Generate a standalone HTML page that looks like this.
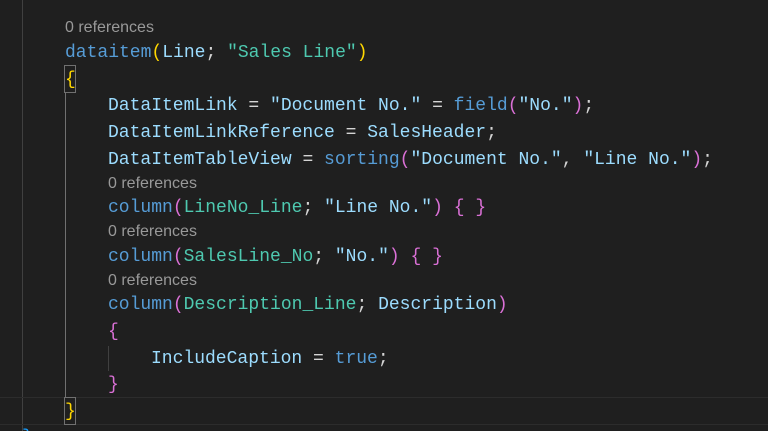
<!DOCTYPE html>
<html><head><meta charset="utf-8"><style>
html,body{margin:0;padding:0;background:#1f1f1f;width:768px;height:431px;overflow:hidden;position:relative}
.l{position:absolute;left:0;white-space:pre;font-family:"Liberation Mono",monospace;font-size:18px;line-height:27px;height:27px;color:#d4d4d4}
.r{position:absolute;white-space:pre;font-family:"Liberation Sans",sans-serif;font-size:16px;color:#999;line-height:20px}
.k{color:#569cd6}.v{color:#9cdcfe}.t{color:#4ec9b0}.g{color:#ffd700}.p{color:#da70d6}.b{color:#179fff}
.gd{position:absolute;width:1px;background:#404040}
</style></head><body>
<div class="gd" style="left:22px;top:0;height:431px"></div>
<div class="gd" style="left:65px;top:92px;height:305px;background:#707070"></div>
<div class="gd" style="left:108px;top:346px;height:25px"></div>
<div style="position:absolute;left:0;top:397px;width:768px;height:26px;border-top:1px solid #2c2c2c;border-bottom:1px solid #2c2c2c"></div>
<div style="position:absolute;left:64px;top:65px;width:10px;height:26px;border:1px solid #707070"></div>
<div style="position:absolute;left:64px;top:397px;width:10px;height:26px;border:1px solid #707070"></div>
<div class="r" style="left:65px;top:18px">0 references</div>
<div class="l" style="top:40px;left:65px"><span class="k">dataitem</span><span class="g">(</span><span class="v">Line</span>; <span class="t">"Sales Line"</span><span class="g">)</span></div>
<div class="l" style="top:67px;left:65px"><span class="g">{</span></div>
<div class="l" style="top:93px;left:108px"><span class="v">DataItemLink</span> = <span class="v">"Document No."</span> = <span class="k">field</span><span class="p">(</span><span class="v">"No."</span><span class="p">)</span>;</div>
<div class="l" style="top:120px;left:108px"><span class="v">DataItemLinkReference</span> = <span class="v">SalesHeader</span>;</div>
<div class="l" style="top:147px;left:108px"><span class="v">DataItemTableView</span> = <span class="k">sorting</span><span class="p">(</span><span class="v">"Document No."</span>, <span class="v">"Line No."</span><span class="p">)</span>;</div>
<div class="r" style="left:108px;top:174px">0 references</div>
<div class="l" style="top:195px;left:108px"><span class="k">column</span><span class="p">(</span><span class="t">LineNo_Line</span>; <span class="v">"Line No."</span><span class="p">)</span> <span class="p">{ }</span></div>
<div class="r" style="left:108px;top:222px">0 references</div>
<div class="l" style="top:244px;left:108px"><span class="k">column</span><span class="p">(</span><span class="t">SalesLine_No</span>; <span class="v">"No."</span><span class="p">)</span> <span class="p">{ }</span></div>
<div class="r" style="left:108px;top:271px">0 references</div>
<div class="l" style="top:292px;left:108px"><span class="k">column</span><span class="p">(</span><span class="t">Description_Line</span>; <span class="v">Description</span><span class="p">)</span></div>
<div class="l" style="top:319px;left:108px"><span class="p">{</span></div>
<div class="l" style="top:346px;left:151px"><span class="v">IncludeCaption</span> = <span class="k">true</span>;</div>
<div class="l" style="top:372px;left:108px"><span class="p">}</span></div>
<div class="l" style="top:399px;left:65px"><span class="g">}</span></div>
<div class="l" style="top:425px;left:22px"><span class="b">}</span></div>
</body></html>
